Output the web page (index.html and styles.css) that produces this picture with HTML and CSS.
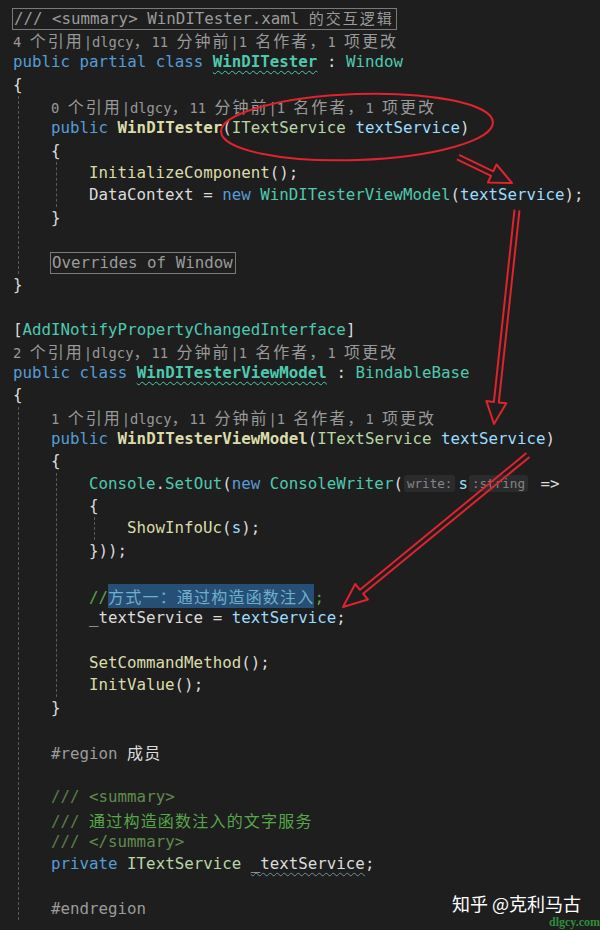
FILE: index.html
```html
<!DOCTYPE html>
<html lang="zh-CN">
<head>
  <meta charset="UTF-8">
  <title>WinDITester.xaml.cs</title>
  <link rel="stylesheet" href="styles.css">
</head>
<body>
  <div class="editor">
    <div class="ln"><span class="fold">/// &lt;summary&gt; WinDITester.xaml <span class="cn">的交互逻辑</span></span></div>
    <div class="ln lens">4 <span class="cn">个引用</span>|dlgcy<span class="cn">，</span>11 <span class="cn">分钟前</span>|1 <span class="cn">名作者，</span>1 <span class="cn">项更改</span></div>
    <div class="ln"><span class="kw">public</span> <span class="kw">partial</span> <span class="kw">class</span> <span class="ty decl sq">WinDITester</span> : <span class="ty">Window</span></div>
    <div class="ln">{</div>
    <div class="blk">
      <div class="ln lens">0 <span class="cn">个引用</span>|dlgcy<span class="cn">，</span>11 <span class="cn">分钟前</span>|1 <span class="cn">名作者，</span>1 <span class="cn">项更改</span></div>
      <div class="ln"><span class="kw">public</span> <span class="fn decl">WinDITester</span>(<span class="if">ITextService</span> <span class="pr">textService</span>)</div>
      <div class="ln">{</div>
      <div class="blk">
        <div class="ln"><span class="fn">InitializeComponent</span>();</div>
        <div class="ln">DataContext = <span class="kw">new</span> <span class="ty">WinDITesterViewModel</span>(<span class="pr">textService</span>);</div>
      </div>
      <div class="ln">}</div>
      <div class="ln"></div>
      <div class="ln"><span class="fold">Overrides of Window</span></div>
    </div>
    <div class="ln">}</div>
    <div class="ln"></div>
    <div class="ln">[<span class="ty">AddINotifyPropertyChangedInterface</span>]</div>
    <div class="ln lens">2 <span class="cn">个引用</span>|dlgcy<span class="cn">，</span>11 <span class="cn">分钟前</span>|1 <span class="cn">名作者，</span>1 <span class="cn">项更改</span></div>
    <div class="ln"><span class="kw">public</span> <span class="kw">class</span> <span class="ty decl sq">WinDITesterViewModel</span> : <span class="ty">BindableBase</span></div>
    <div class="ln">{</div>
    <div class="blk">
      <div class="ln lens">1 <span class="cn">个引用</span>|dlgcy<span class="cn">，</span>11 <span class="cn">分钟前</span>|1 <span class="cn">名作者，</span>1 <span class="cn">项更改</span></div>
      <div class="ln"><span class="kw">public</span> <span class="fn decl">WinDITesterViewModel</span>(<span class="if">ITextService</span> <span class="pr">textService</span>)</div>
      <div class="ln">{</div>
      <div class="blk">
        <div class="ln"><span class="ty">Console</span>.<span class="ty">SetOut</span>(<span class="kw">new</span> <span class="ty">ConsoleWriter</span>(<span class="hint">write:</span><span class="pr">s</span><span class="hint">:string</span> =&gt;</div>
        <div class="ln">{</div>
        <div class="blk">
          <div class="ln"><span class="fn">ShowInfoUc</span>(<span class="pr">s</span>);</div>
        </div>
        <div class="ln">}));</div>
        <div class="ln"></div>
        <div class="ln"><span class="cm">//<span class="sel cn">方式一：通过构造函数注入</span>;</span></div>
        <div class="ln">_textService = <span class="pr">textService</span>;</div>
        <div class="ln"></div>
        <div class="ln"><span class="fn">SetCommandMethod</span>();</div>
        <div class="ln"><span class="fn">InitValue</span>();</div>
      </div>
      <div class="ln">}</div>
      <div class="ln"></div>
      <div class="ln"><span class="pp">#region</span> <span class="cn">成员</span></div>
      <div class="ln"></div>
      <div class="ln"><span class="dc">///</span> <span class="dg">&lt;summary&gt;</span></div>
      <div class="ln"><span class="dc">///</span> <span class="cm cn">通过构造函数注入的文字服务</span></div>
      <div class="ln"><span class="dc">///</span> <span class="dg">&lt;/summary&gt;</span></div>
      <div class="ln"><span class="kw">private</span> <span class="if">ITextService</span> <span class="sqf">_textService</span>;</div>
      <div class="ln"></div>
      <div class="ln"><span class="pp">#endregion</span></div>
    </div>

    <svg class="marks" width="600" height="930" viewBox="0 0 600 930">
      <ellipse cx="357" cy="127" rx="136" ry="33" transform="rotate(-2 357 127)"/>
      <polyline points="456.9,159.3 491.1,175.8 487.9,182.5 512,183 496.5,164.5 493.3,171.3 459.1,154.8"/>
      <polyline points="514.5,209.7 493.9,401.9 486.4,401.1 494,424 506.3,403.2 498.8,402.4 519.5,210.3"/>
      <polyline points="526.4,453.1 360,589.8 355.2,584 343,607 367.9,599.5 363.1,593.7 529.6,456.9"/>
    </svg>
    <div class="wm">知乎 @克利马古</div>
    <div class="site">dlgcy.com</div>
  </div>
</body>
</html>
```

FILE: styles.css
```css
body {
  margin: 0;
  background: #1e1e1e;
}

.editor {
  position: relative;
  width: 600px;
  height: 930px;
  overflow: hidden;
  box-sizing: border-box;
  padding: 8px 0 0 13px;
  font-family: "DejaVu Sans Mono", monospace;
  font-size: 15.8px;
  color: #dcdcdc;
}

.ln {
  height: 22.4px;
  line-height: 22.4px;
  white-space: pre;
}

.blk {
  margin-left: 5px;
  padding-left: 32px;
  border-left: 1px dashed #5a5a5a;
}

.cn {
  font-family: "Noto Sans CJK SC", sans-serif;
  font-size: 16px;
  letter-spacing: 1.2px;
}

.lens {
  height: 21px;
  line-height: 21px;
  font-size: 13.8px;
  color: #999;
}

.lens .cn {
  font-size: 16px;
  letter-spacing: 2px;
}

.fold {
  display: inline-block;
  vertical-align: top;
  line-height: 20px;
  padding: 0 2px 0 1px;
  margin-left: -1px;
  border: 1px solid #7a7a7a;
  color: #9b9b9b;
}

.fold .cn {
  font-size: 15px;
  letter-spacing: 2px;
  line-height: 18px;
}

.kw { color: #569cd6; }
.ty { color: #4ec9b0; }
.fn { color: #dcdcaa; }
.if { color: #b8d7a3; }
.pr { color: #9cdcfe; }
.cm { color: #57a64a; }
.dc { color: #5a7f4a; }
.dg { color: #608b4e; }
.pp { color: #9b9b9b; }

.decl { font-weight: bold; }

.sq {
  text-decoration: underline wavy #4ec9b0;
  text-decoration-thickness: 1px;
  text-underline-offset: 3px;
}

.sqf {
  text-decoration: underline wavy #6f8fa0;
  text-decoration-thickness: 1px;
  text-underline-offset: 3px;
}

.sel {
  background: #264f78;
  color: #6fb0c8;
}

.hint {
  display: inline-block;
  vertical-align: middle;
  margin: -2px 3px 0 1px;
  padding: 0 3px;
  line-height: 17px;
  font-size: 12.6px;
  color: #858585;
  background: #2b2b2e;
  border-radius: 3px;
}

.marks {
  position: absolute;
  left: 0;
  top: 0;
  fill: none;
  stroke: #e0232d;
  stroke-width: 2;
  stroke-linejoin: round;
}

.wm {
  position: absolute;
  left: 452px;
  top: 892px;
  line-height: 22px;
  font-family: "Noto Sans CJK SC", sans-serif;
  font-size: 18px;
  color: #ffffff;
  white-space: nowrap;
}

.site {
  position: absolute;
  right: 0;
  top: 915px;
  line-height: 14px;
  font-family: "Liberation Serif", serif;
  font-weight: bold;
  font-size: 12px;
  color: #2f8f3a;
}
```
